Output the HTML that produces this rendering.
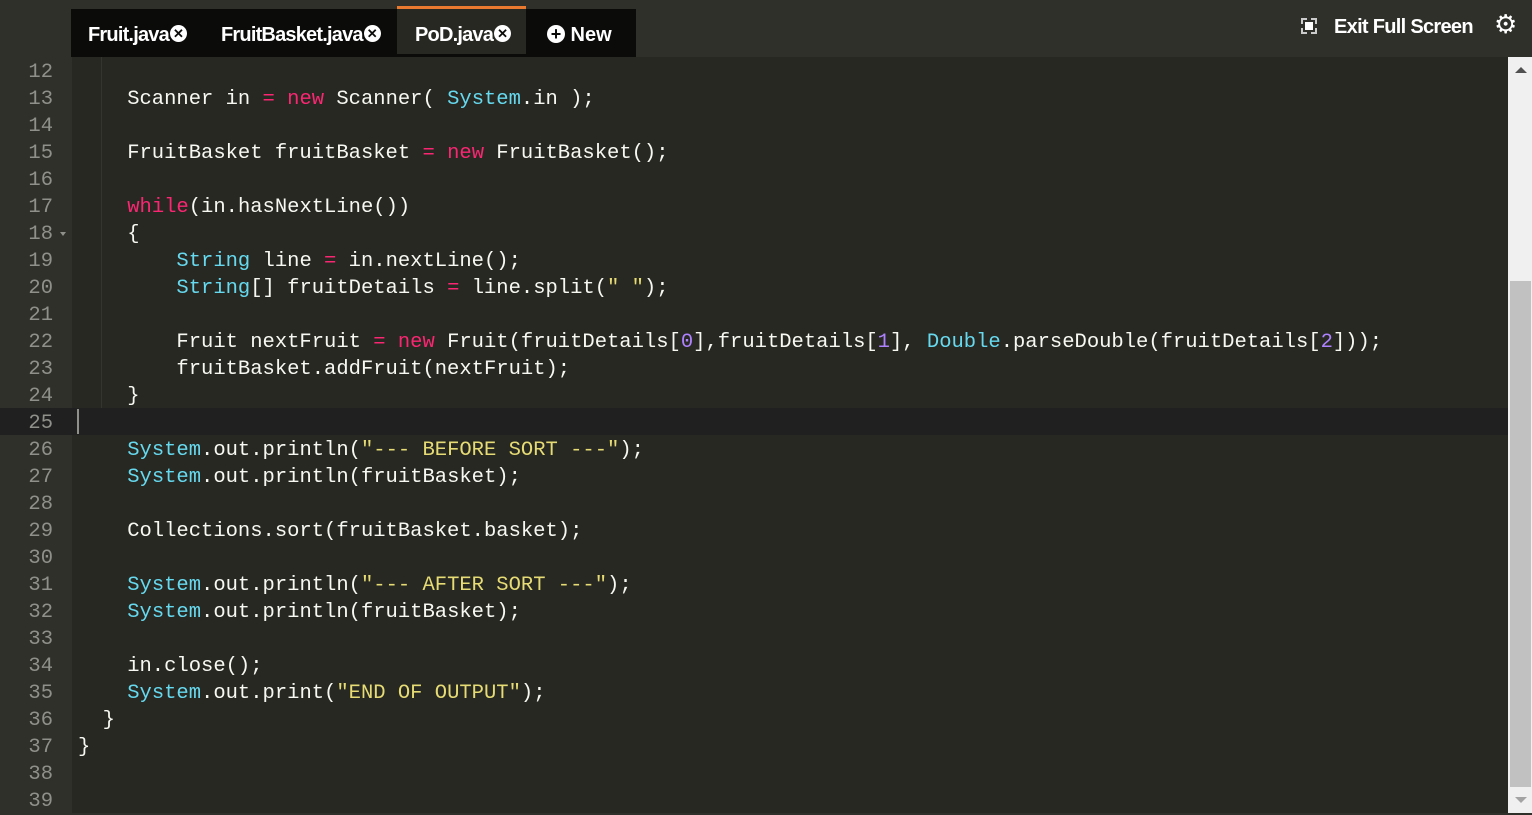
<!DOCTYPE html>
<html><head><style>
body{margin:0;width:1532px;height:813px;overflow:hidden;background:#2f302a;font-family:"Liberation Sans",sans-serif;position:relative}
.top{position:absolute;left:0;top:0;width:1532px;height:57px;background:#2f302a}
.tabs{position:absolute;left:71px;top:9px;height:48px;width:565px;background:#0b0b0a}
.tab{position:absolute;top:0;height:48px;line-height:48px;color:#fff;font-weight:bold;font-size:20px;letter-spacing:-0.8px}
.x{display:inline-block;width:17px;height:17px;border-radius:50%;background:#fff;color:#0b0b0a;font-size:13px;line-height:17px;text-align:center;vertical-align:middle;position:relative;top:-2px;margin-left:1px;letter-spacing:0}
.active{background:#272822;border-top:3px solid #e8792e;top:-3px}
.gutter{position:absolute;left:0;top:57px;width:72px;height:756px;background:#2f302a}
.editor{position:absolute;left:72px;top:57px;width:1436px;height:756px;background:#272822}
.cur{position:absolute;left:0;top:408px;width:1508px;height:27px;background:#202020}
.lines{position:absolute;left:0;top:59px;font-family:"Liberation Mono",monospace;font-size:20.5px}
.l{height:27px;line-height:27px;white-space:pre;color:#f8f8f2;position:relative}
.n{display:inline-block;width:53px;text-align:right;color:#8f908a;margin-right:25px}
.k{color:#f92672}.c{color:#66d9ef}.s{color:#e6db74}.m{color:#ae81ff}
.sb{position:absolute;left:1508px;top:57px;width:24px;height:756px;background:#f0f0f0}
.th{position:absolute;left:1510px;top:281px;width:21px;height:506px;background:#c1c1c1}
.guide{position:absolute;left:101px;top:57px;width:1px;height:351px;background:#34352f}
</style></head><body>
<div class="top"></div>
<div class="tabs">
<div class="tab" style="left:17px;top:2px">Fruit.java<span class="x">✕</span></div>
<div class="tab" style="left:150px;top:2px">FruitBasket.java<span class="x">✕</span></div>
<div class="tab active" style="left:326px;width:129px;padding-left:18px;box-sizing:border-box;line-height:53px">PoD.java<span class="x">✕</span></div>
<div class="tab" style="left:475px;top:2px;letter-spacing:0"><span class="x" style="width:18px;height:18px;line-height:18px;font-size:18px">+</span> New</div>
</div>
<div style="position:absolute;left:1301px;top:18px;width:16px;height:16px;border:2px dashed #ccc;box-sizing:border-box"><div style="position:absolute;left:2px;top:2px;width:8px;height:8px;background:#fff"></div></div>
<div style="position:absolute;left:1334px;top:16px;color:#fff;font-weight:bold;font-size:20px;letter-spacing:-0.7px">Exit Full Screen</div>
<div style="position:absolute;left:1494px;top:9px;color:#fff;font-size:26px">⚙</div>
<div class="gutter"></div>
<div class="editor"></div>
<div class="cur"></div>
<div class="guide"></div>
<div style="position:absolute;left:77px;top:409px;width:2px;height:25px;background:#8f908a"></div>
<div class="lines">
<div class="l"><span class="n">12</span></div>
<div class="l"><span class="n">13</span>    Scanner in <span class="k">=</span> <span class="k">new</span> Scanner( <span class="c">System</span>.in );</div>
<div class="l"><span class="n">14</span></div>
<div class="l"><span class="n">15</span>    FruitBasket fruitBasket <span class="k">=</span> <span class="k">new</span> FruitBasket();</div>
<div class="l"><span class="n">16</span></div>
<div class="l"><span class="n">17</span>    <span class="k">while</span>(in.hasNextLine())</div>
<div class="l"><span class="n">18</span>    {</div>
<div class="l"><span class="n">19</span>        <span class="c">String</span> line <span class="k">=</span> in.nextLine();</div>
<div class="l"><span class="n">20</span>        <span class="c">String</span>[] fruitDetails <span class="k">=</span> line.split(<span class="s">" "</span>);</div>
<div class="l"><span class="n">21</span></div>
<div class="l"><span class="n">22</span>        Fruit nextFruit <span class="k">=</span> <span class="k">new</span> Fruit(fruitDetails[<span class="m">0</span>],fruitDetails[<span class="m">1</span>], <span class="c">Double</span>.parseDouble(fruitDetails[<span class="m">2</span>]));</div>
<div class="l"><span class="n">23</span>        fruitBasket.addFruit(nextFruit);</div>
<div class="l"><span class="n">24</span>    }</div>
<div class="l"><span class="n">25</span></div>
<div class="l"><span class="n">26</span>    <span class="c">System</span>.out.println(<span class="s">"--- BEFORE SORT ---"</span>);</div>
<div class="l"><span class="n">27</span>    <span class="c">System</span>.out.println(fruitBasket);</div>
<div class="l"><span class="n">28</span></div>
<div class="l"><span class="n">29</span>    Collections.sort(fruitBasket.basket);</div>
<div class="l"><span class="n">30</span></div>
<div class="l"><span class="n">31</span>    <span class="c">System</span>.out.println(<span class="s">"--- AFTER SORT ---"</span>);</div>
<div class="l"><span class="n">32</span>    <span class="c">System</span>.out.println(fruitBasket);</div>
<div class="l"><span class="n">33</span></div>
<div class="l"><span class="n">34</span>    in.close();</div>
<div class="l"><span class="n">35</span>    <span class="c">System</span>.out.print(<span class="s">"END OF OUTPUT"</span>);</div>
<div class="l"><span class="n">36</span>  }</div>
<div class="l"><span class="n">37</span>}</div>
<div class="l"><span class="n">38</span></div>
<div class="l"><span class="n">39</span></div>
</div>
<div style="position:absolute;left:60px;top:232px;width:0;height:0;border-left:3px solid transparent;border-right:3px solid transparent;border-top:4px solid #8f908a"></div>
<div class="sb"></div>
<div class="th"></div>
<div style="position:absolute;left:1515px;top:67px;width:0;height:0;border-left:6px solid transparent;border-right:6px solid transparent;border-bottom:6px solid #505050"></div>
<div style="position:absolute;left:1515px;top:797px;width:0;height:0;border-left:6px solid transparent;border-right:6px solid transparent;border-top:6px solid #a3a3a3"></div>
</body></html>
